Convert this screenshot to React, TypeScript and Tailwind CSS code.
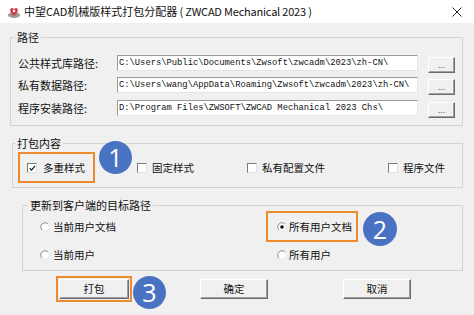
import React from "react";

const CJK = '"Noto Sans CJK SC", "Liberation Sans", sans-serif';

function Checkbox({ checked }: { checked?: boolean }) {
  return (
    <span className="relative inline-block w-[10px] h-[10px] bg-white border-t border-l border-t-[#7a7a7a] border-l-[#7a7a7a] border-r border-b border-r-[#e2e2e2] border-b-[#e2e2e2] shrink-0">
      {checked && (
        <svg viewBox="0 0 10 10" className="absolute left-0 top-0 w-[9px] h-[9px]">
          <path d="M2 4.5 L4 6.8 L7.8 2.2" stroke="#111" strokeWidth="1.3" fill="none" />
        </svg>
      )}
    </span>
  );
}

function Radio({ checked }: { checked?: boolean }) {
  return (
    <svg viewBox="0 0 10 10" className="w-[10px] h-[10px] shrink-0">
      <circle cx="5" cy="5" r="4.2" fill="#fff" />
      <path d="M8 2 A4.2 4.2 0 0 0 2 8" stroke="#8a8a8a" strokeWidth="1" fill="none" />
      <path d="M2 8 A4.2 4.2 0 0 0 8 2" stroke="#e6e6e6" strokeWidth="1" fill="none" />
      {checked && <circle cx="5" cy="5" r="1.8" fill="#111" />}
    </svg>
  );
}

function Btn({ children, w, small }: { children: React.ReactNode; w: string; small?: boolean }) {
  return (
    <div
      className={`${w} flex items-center justify-center bg-[#f0f0f0] border-t border-l border-t-white border-l-white border-r border-b border-r-[#6b6b6b] border-b-[#6b6b6b] shadow-[inset_-1px_-1px_0_#a0a0a0] ${small ? "h-[16px]" : "h-[20px]"}`}
    >
      {children}
    </div>
  );
}

function PathRow({ label, value, mt }: { label: string; value: string; mt: string }) {
  return (
    <div className={`flex items-center h-[16px] ${mt}`}>
      <div className="ml-[7px] w-[99px] text-[11px] leading-[16px] text-[#111]" style={{ fontFamily: CJK }}>
        {label}
      </div>
      <div className="w-[301px] h-[16px] bg-white border-t border-l border-t-[#9a9a9a] border-l-[#9a9a9a] border-r border-b border-r-[#e4e4e4] border-b-[#e4e4e4] flex items-center overflow-hidden">
        <span className="pl-[1px] text-[8.8px] leading-[14px] text-[#111] whitespace-nowrap" style={{ fontFamily: '"Liberation Mono", monospace' }}>
          {value}
        </span>
      </div>
      <div className="ml-[10px] mt-[3px]">
        <Btn w="w-[27px]" small>
          <span className="text-[9px] leading-[9px] text-[#444] pt-[2px]" style={{ fontFamily: '"Liberation Sans", sans-serif' }}>...</span>
        </Btn>
      </div>
    </div>
  );
}

function Badge({ n, cls }: { n: string; cls: string }) {
  return (
    <div
      className={`absolute rounded-full bg-[#4a72c2] flex items-center justify-center text-white ${cls}`}
      style={{ fontFamily: '"Open Sans", "Liberation Sans", sans-serif' }}
    >
      <span className="text-[25px] leading-none">{n}</span>
    </div>
  );
}

export default function App() {
  return (
    <div className="relative w-[474px] h-[315px] bg-[#f0f0f0] overflow-hidden text-[#111]" style={{ fontFamily: CJK }}>
      {/* title bar */}
      <div className="h-[23px] bg-white flex items-center">
        <svg viewBox="0 0 14 14" className="ml-[7px] w-[14px] h-[14px]">
          <ellipse cx="7" cy="10" rx="6" ry="3" fill="#9a9a9a" />
          <path d="M7 11 C2 7 2.5 3 5 3 C6 3 7 4 7 4.8 C7 4 8 3 9 3 C11.5 3 12 7 7 11Z" fill="#d23a4a" />
          <circle cx="7" cy="6" r="1.2" fill="#fff" />
        </svg>
        <span className="ml-[3px] text-[11px] leading-[23px] text-[#111] whitespace-nowrap">
          中望CAD机械版样式打包分配器
          <span className="tracking-[-0.2px]"> ( ZWCAD Mechanical 2023 )</span>
        </span>
        <svg viewBox="0 0 10 10" className="ml-auto mr-[12px] w-[10px] h-[10px]">
          <path d="M0.5 0.5 L9.5 9.5 M9.5 0.5 L0.5 9.5" stroke="#222" strokeWidth="1" />
        </svg>
      </div>

      {/* group 1 */}
      <fieldset className="ml-[10px] mt-[7px] w-[453px] border border-[#d3d3d3] pb-[9px]">
        <legend className="ml-[4px] px-[2px] text-[11px] leading-[14px]">路径</legend>
        <PathRow label="公共样式库路径:" value="C:\Users\Public\Documents\Zwsoft\zwcadm\2023\zh-CN\" mt="mt-[11px]" />
        <PathRow label="私有数据路径:" value="C:\Users\wang\AppData\Roaming\Zwsoft\zwcadm\2023\zh-CN\" mt="mt-[6px]" />
        <PathRow label="程序安装路径:" value="D:\Program Files\ZWSOFT\ZWCAD Mechanical 2023 Chs\" mt="mt-[7px]" />
      </fieldset>

      {/* group 2 */}
      <fieldset className="ml-[12px] mt-[10px] w-[451px] border border-[#d3d3d3] pb-[4px]">
        <legend className="ml-[2px] px-[2px] text-[11px] leading-[14px]">打包内容</legend>
        <div className="flex items-center mt-[2px] h-[31px] text-[10.5px]">
          <div className="ml-[5px] w-[77px] h-[31px] border-2 border-[#ee8a2e] flex items-center pl-[7px] gap-[6px]">
            <Checkbox checked />
            <span>多重样式</span>
          </div>
          <div className="ml-[42px] w-[110px] flex items-center gap-[5px]">
            <Checkbox />
            <span>固定样式</span>
          </div>
          <div className="w-[141px] flex items-center gap-[5px]">
            <Checkbox />
            <span>私有配置文件</span>
          </div>
          <div className="flex items-center gap-[5px]">
            <Checkbox />
            <span>程序文件</span>
          </div>
        </div>
      </fieldset>

      {/* group 3 */}
      <fieldset className="ml-[22px] mt-[11px] w-[441px] border border-[#d3d3d3] pb-[7px] text-[10.5px]">
        <legend className="ml-[5px] px-[2px] text-[11px] leading-[12px]">更新到客户端的目标路径</legend>
        <div className="flex items-center h-[31px]">
          <div className="w-[243px] flex items-center">
            <div className="ml-[17px] flex items-center gap-[3px]">
              <Radio />
              <span>当前用户文档</span>
            </div>
          </div>
          <div className="w-[92px] h-[31px] border-2 border-[#ee8a2e] flex items-center pl-[9px] gap-[2px]">
            <Radio checked />
            <span>所有用户文档</span>
          </div>
        </div>
        <div className="flex items-center h-[16px] mt-[5px]">
          <div className="w-[243px] flex items-center">
            <div className="ml-[17px] flex items-center gap-[3px]">
              <Radio />
              <span>当前用户</span>
            </div>
          </div>
          <div className="ml-[11px] flex items-center gap-[2px]">
            <Radio />
            <span>所有用户</span>
          </div>
        </div>
      </fieldset>

      {/* buttons */}
      <div className="flex items-center mt-[5px] h-[26px] text-[10.5px]">
        <div className="ml-[56px] w-[76px] h-[26px] border-2 border-[#ee8a2e] flex items-center justify-center">
          <Btn w="w-[70px]">打包</Btn>
        </div>
        <div className="ml-[68px]">
          <Btn w="w-[68px]">确定</Btn>
        </div>
        <div className="ml-[75px]">
          <Btn w="w-[68px]">取消</Btn>
        </div>
      </div>

      <Badge n="1" cls="left-[99px] top-[141px] w-[33px] h-[33px]" />
      <Badge n="2" cls="left-[363px] top-[212px] w-[34px] h-[34px]" />
      <Badge n="3" cls="left-[133px] top-[276px] w-[33px] h-[33px]" />
    </div>
  );
}
